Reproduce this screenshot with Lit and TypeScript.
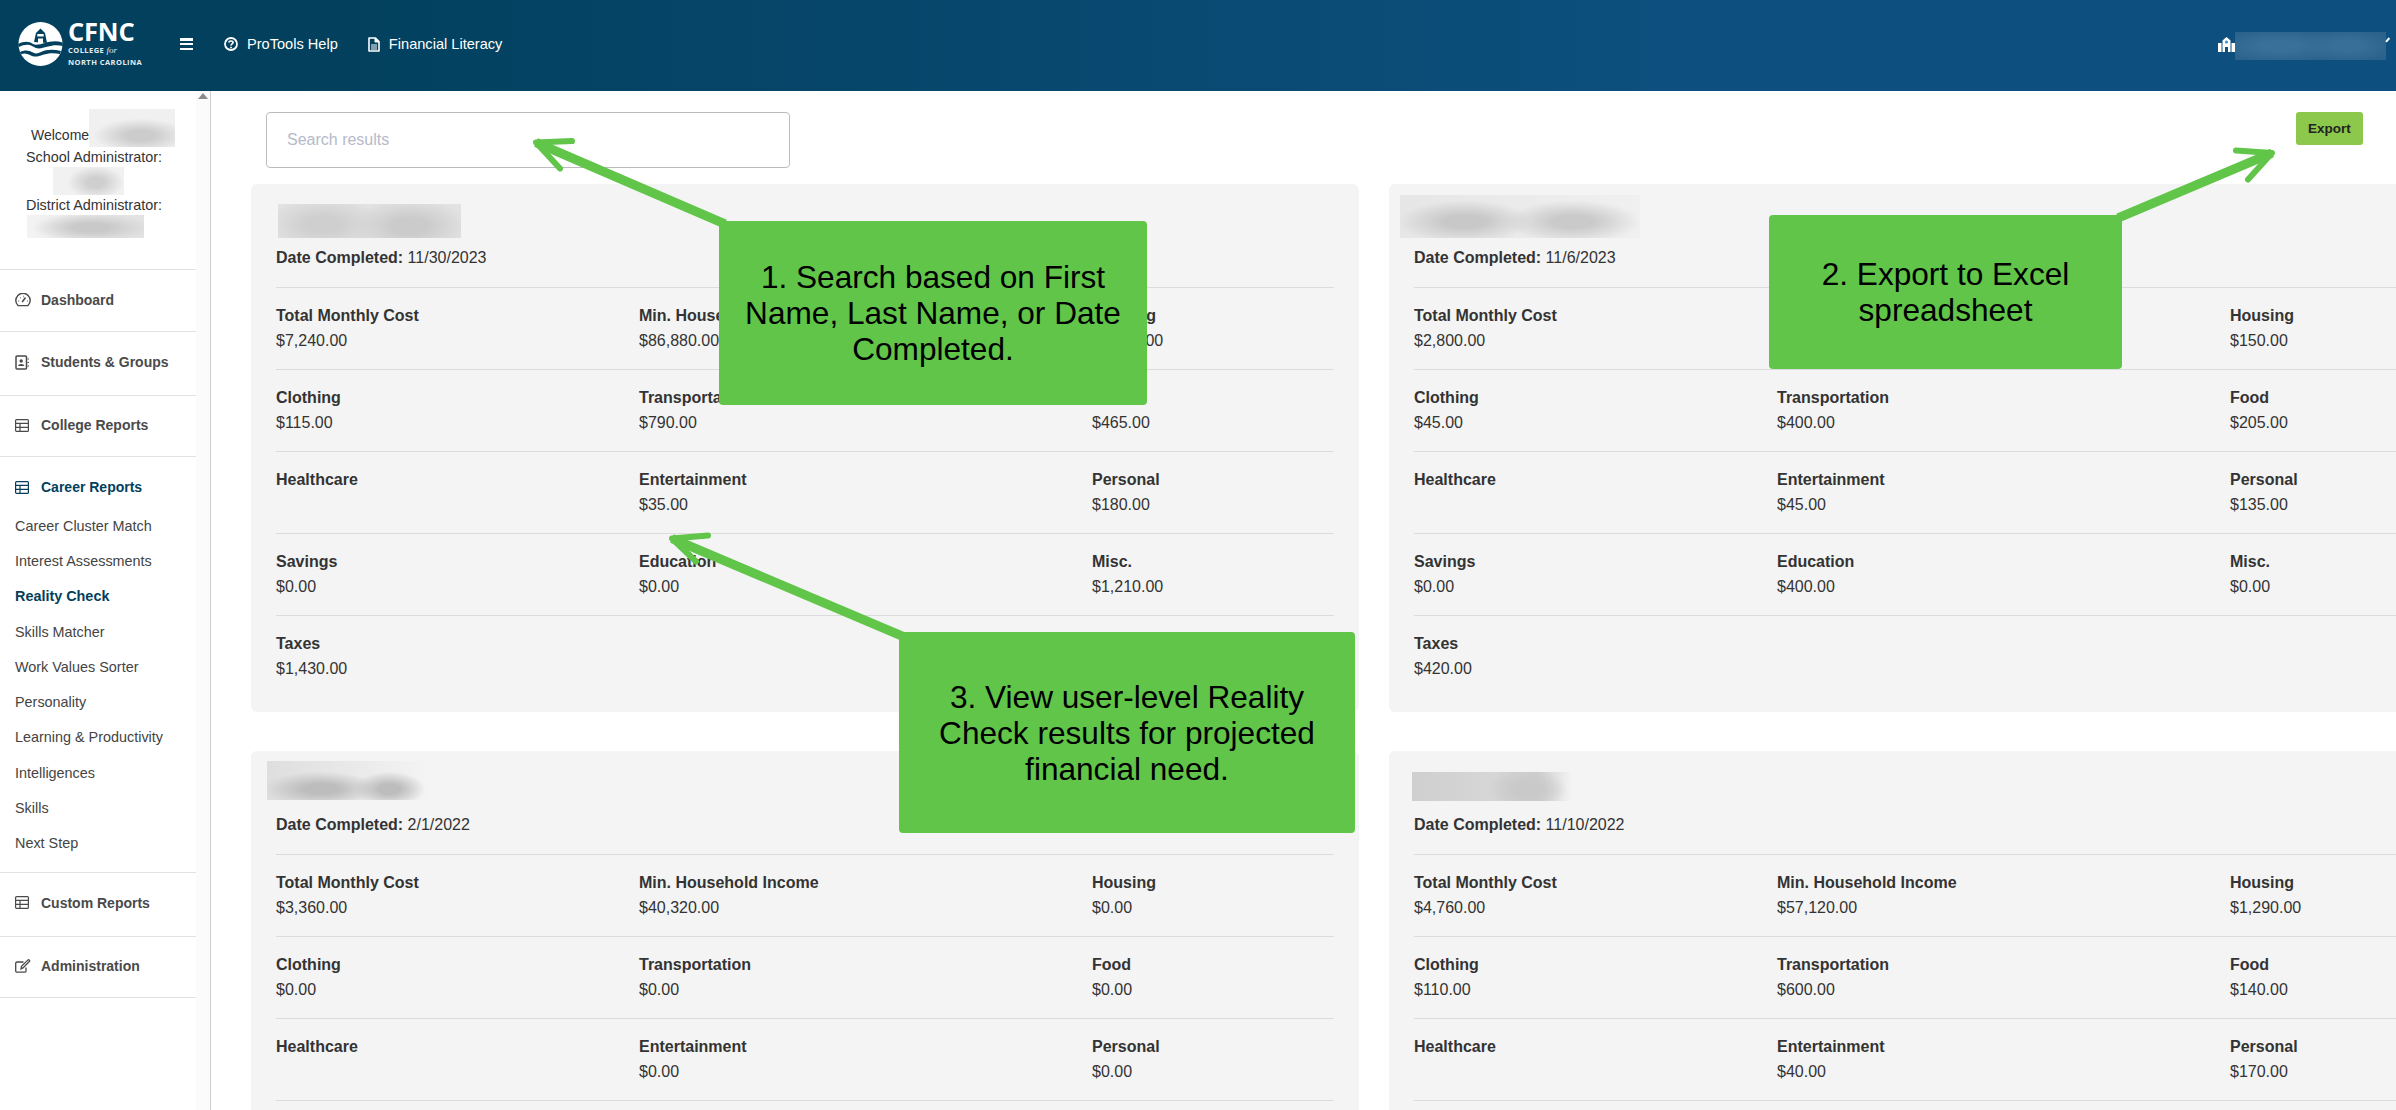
import { LitElement, html, css, svg } from "lit";
import { customElement } from "lit/decorators.js";

type Cell = [string, string];
interface Card { name: string; date: string; blur: [number, number, number, number]; rows: Cell[][]; }

const m = (s: string) => (s ? "$" + s + ".00" : "");
const full = (v: string[]): Cell[][] => [
  [["Total Monthly Cost", m(v[0])], ["Min. Household Income", m(v[1])], ["Housing", m(v[2])]],
  [["Clothing", m(v[3])], ["Transportation", m(v[4])], ["Food", m(v[5])]],
  [["Healthcare", ""], ["Entertainment", m(v[6])], ["Personal", m(v[7])]],
  [["Savings", m(v[8])], ["Education", m(v[9])], ["Misc.", m(v[10])]],
  [["Taxes", m(v[11])]],
];
const part = (v: string[]): Cell[][] => [...full([...v, "", "", "", ""]).slice(0, 3), []];

const CARDS: Card[] = [
  { name: "a", date: "11/30/2023", blur: [27, 20, 183, 34], rows: full(["7,240", "86,880", "3,015", "115", "790", "465", "35", "180", "0", "0", "1,210", "1,430"]) },
  { name: "b", date: "11/6/2023", blur: [11, 11, 240, 43], rows: full(["2,800", "33,600", "150", "45", "400", "205", "45", "135", "0", "400", "0", "420"]) },
  { name: "c", date: "2/1/2022", blur: [16, 10, 180, 39], rows: part(["3,360", "40,320", "0", "0", "0", "0", "0", "0"]) },
  { name: "d", date: "11/10/2022", blur: [23, 21, 160, 29], rows: part(["4,760", "57,120", "1,290", "110", "600", "140", "40", "170"]) },
];

const SUBS = ["Career Cluster Match", "Interest Assessments", "Reality Check", "Skills Matcher", "Work Values Sorter", "Personality", "Learning & Productivity", "Intelligences", "Skills", "Next Step"];

const icoGauge = svg`<svg class="ni" viewBox="0 0 16 14" width="16" height="14" fill="none" stroke="currentColor" stroke-width="1.4"><path d="M3 12.6h10c1.2-1.2 2.2-3 2.2-5.1A7.2 7.2 0 0 0 .8 7.500c0 2.100 1 3.900 2.200 5.100z"/><path d="M7.200 9 10.500 4.500" stroke-width="1.500"/><path d="M3.500 8h.6M5 4.700h.6M8 3.500h.6M12 8h.6" stroke-width="1.300"/></svg>`;
const icoContact = svg`<svg class="ni" viewBox="0 0 14 15" width="14" height="15" fill="none" stroke="currentColor" stroke-width="1.500"><rect x="1" y="1" width="10.500" height="13" rx="1"/><circle cx="6.200" cy="6" r="1.700" fill="currentColor" stroke="none"/><path d="M3 11c.3-2.800 6-2.800 6.400 0z" fill="currentColor" stroke="none"/><path d="M12.500 4h1.500M12.500 7.500h1.500M12.500 11h1.500" stroke-width="1.200"/></svg>`;
const icoTable = svg`<svg class="ni" viewBox="0 0 14 13" width="14" height="13" fill="none" stroke="currentColor" stroke-width="1.200"><rect x=".6" y=".6" width="12.800" height="11.800" rx="1"/><path d="M.6 4.300h12.800M.6 8.400h12.800M5 4.300v8.100"/></svg>`;
const icoPen = svg`<svg class="ni" viewBox="0 0 16 14" width="16" height="14" fill="none" stroke="currentColor" stroke-width="1.300"><path d="M11 8.500v3.400c0 .8-.5 1.300-1.300 1.300H2c-.8 0-1.300-.5-1.300-1.300V4.300C.7 3.500 1.200 3 2 3h6.500"/><path d="M6 9.800l.5-2.400 6.300-6.300c.5-.5 1.100-.5 1.500 0 .5.500.5 1.100 0 1.500L8 8.900z"/></svg>`;

@customElement("app-root")
export class AppRoot extends LitElement {
  static styles = css`
    :host { display: block; position: relative; width: 2396px; height: 1110px; overflow: hidden; background: #fff; font-family: "Liberation Sans", Arial, sans-serif; color: #333; }
    * { box-sizing: border-box; }
    header { height: 91px; padding: 0 0 3px 18px; display: flex; align-items: center; color: #fff; background: linear-gradient(90deg, #02405d 0%, #02405d 12%, #0d4f7e 70%, #0d4f7e 100%); }
    .logo { display: flex; width: 162px; flex: none; align-items: center; }
    .logotext { margin-left: 5px; display: flex; flex-direction: column; font-family: "Open Sans", sans-serif; font-weight: 700; color: #fff; }
    .cfnc { font-size: 25.500px; line-height: 21px; letter-spacing: -.2px; margin-bottom: 2px; }
    .lsub { font-size: 7.500px; line-height: 12px; letter-spacing: .45px; color: #e6edf1; }
    .lsub i { font-family: "Liberation Serif", serif; font-size: 9px; font-weight: 400; letter-spacing: 0; }
    .burger { width: 13px; height: 12px; flex: none; display: flex; flex-direction: column; justify-content: space-between; margin-right: 31px; }
    .burger span { display: block; height: 2.500px; background: #fff; }
    .hlink { display: flex; align-items: center; font-size: 14.600px; color: #fff; }
    .hlink svg { margin-right: 9px; flex: none; }
    .hlink.help { margin-right: 30px; }
    .hright { margin-left: auto; margin-right: 6px; display: flex; align-items: center; }
    .hblur { width: 151px; height: 28px; margin-top: 4px; background: radial-gradient(ellipse 45% 60% at 30% 50%, #39709a, #39709a 30%, transparent), radial-gradient(ellipse 30% 60% at 75% 50%, #386f98, #386f98 30%, transparent), #2a628c; }
    .tick { width: 5px; height: 1.500px; background: #fff; transform: rotate(-50deg); margin: -8px 0 0 -1px; }
    .body { display: flex; height: 1019px; }
    aside { width: 211px; flex: none; display: flex; border-right: 1px solid #cfcfcf; }
    .snav { width: 196px; flex: none; }
    .sbar { flex: 1; background: #fbfbfb; display: flex; justify-content: center; padding-top: 2px; }
    .sbar i { width: 0; height: 0; border-left: 5px solid transparent; border-right: 5px solid transparent; border-bottom: 6px solid #8a8a8a; }
    .user { height: 178px; padding-top: 18px; font-size: 14.400px; color: #333; }
    .welcome { display: flex; align-items: flex-end; height: 38px; margin-left: 31px; font-size: 14px; padding-bottom: 4px; position: relative; }
    .ub { flex: none; }
    .ub1 { width: 86px; height: 38px; margin-bottom: -4px; background: radial-gradient(ellipse 55% 45% at 60% 70%, #ccc, #ccc 30%, transparent), #f0f0f0; }
    .ul { line-height: 20px; margin-left: 26px; white-space: nowrap; }
    .ub2 { width: 71px; height: 28px; margin-left: 53px; background: radial-gradient(ellipse 40% 60% at 60% 55%, #cfcfcf, #cfcfcf 30%, transparent), #f1f1f1; }
    .ub3 { width: 117px; height: 23px; margin: 0 0 0 27px; background: radial-gradient(ellipse 50% 65% at 55% 55%, #c9c9c9, #c9c9c9 30%, transparent), linear-gradient(90deg, #f3f3f3, #e2e2e2); }
    .nav { border-top: 1px solid #e2e2e2; display: flex; align-items: center; padding: 0 0 1px 15px; font-size: 14px; font-weight: 700; color: #4a4a4a; }
    .nav .ni { flex: none; margin-right: 10px; }
    .nav .iw { width: 26px; flex: none; display: flex; }
    .n-dash { height: 62px; }
    .n-stud { height: 64px; padding-bottom: 3px; }
    .n-coll { height: 61px; padding-bottom: 2px; }
    .n-group { height: 52px; color: #033f5c; padding-top: 9px; padding-bottom: 0; }
    .n-cust { height: 64px; padding-bottom: 3px; }
    .n-admin { height: 62px; border-bottom: 1px solid #e2e2e2; }
    .subs { padding-bottom: 11px; }
    .sub { height: 35.300px; display: flex; align-items: center; padding-left: 15px; font-size: 14.400px; color: #444; }
    .sub.on { font-weight: 700; color: #033f5c; }
    main { flex: 1; min-width: 0; padding: 21px 33px 0 40px; overflow: hidden; }
    .tools { display: flex; justify-content: space-between; align-items: flex-start; margin: 0 0 16px 15px; }
    .search { width: 524px; height: 56px; border: 1px solid #bbb; border-radius: 4px; padding: 0 20px; display: flex; align-items: center; font-size: 16px; color: #b6bac9; }
    .export { width: 67px; height: 33px; border-radius: 3px; background: #8bc84b; display: flex; align-items: center; justify-content: center; font-size: 13.500px; font-weight: 700; color: #222; }
    .cards { display: grid; grid-template-columns: 1108px 1108px; gap: 39px 30px; }
    .card { position: relative; background: #f4f4f4; border-radius: 6px; padding: 0 25px 15px; }
    .nm { height: 62px; }
    .blur { position: absolute; }
    .blur-a { background: radial-gradient(ellipse 32% 80% at 25% 60%, #cfcfcf, #cfcfcf 30%, transparent), radial-gradient(ellipse 32% 80% at 72% 65%, #cbcbcb, #cbcbcb 30%, transparent), #e2e2e2; }
    .blur-b { background: radial-gradient(ellipse 28% 50% at 27% 62%, #c8c8c8, #c8c8c8 30%, transparent), radial-gradient(ellipse 28% 50% at 72% 62%, #cacaca, #cacaca 30%, transparent), linear-gradient(90deg, #e6e6e6, #f0f0f0); }
    .blur-c { background: radial-gradient(ellipse 32% 45% at 30% 72%, #bdbdbd, #bdbdbd 30%, transparent), radial-gradient(ellipse 20% 45% at 68% 72%, #bdbdbd, #bdbdbd 30%, transparent), linear-gradient(90deg, #dedede, #f4f4f4 92%); }
    .blur-d { background: radial-gradient(ellipse 25% 70% at 72% 60%, #c9c9c9, #c9c9c9 30%, transparent), linear-gradient(90deg, #cfcfcf 0%, #d6d6d6 50%, #cdcdcd 78%, #f4f4f4 100%); }
    .date { height: 41px; line-height: 24px; font-size: 16px; white-space: nowrap; }
    b { font-weight: 700; }
    .row { display: grid; grid-template-columns: 363px 453px 1fr; height: 82px; border-top: 1px solid #dcdcdc; padding-top: 18px; font-size: 16px; }
    .lab { font-weight: 700; line-height: 20px; margin-bottom: 5px; }
    .val { line-height: 20px; }
    .callout { position: absolute; background: #60c548; border-radius: 4px; color: #000; font-size: 31.600px; line-height: 36px; text-align: center; display: flex; align-items: center; justify-content: center; padding: 0 14px; }
    .c1 { left: 719px; top: 221px; width: 428px; height: 184px; }
    .c2 { left: 1769px; top: 215px; width: 353px; height: 154px; }
    .c3 { left: 899px; top: 632px; width: 456px; height: 201px; padding: 0 30px; }
    .arrows { position: absolute; left: 0; top: 0; pointer-events: none; }
  `;

  private arrow(tip: [number, number], a: [number, number], b: [number, number], tail: [number, number]) {
    return svg`<line x1=${tip[0]} y1=${tip[1]} x2=${tail[0]} y2=${tail[1]} stroke-width="9"/>
      <polyline points="${a[0]},${a[1]} ${tip[0]},${tip[1]} ${b[0]},${b[1]}" fill="none" stroke-width="6" stroke-linecap="round" stroke-linejoin="round"/>`;
  }

  private card(c: Card) {
    const [l, t, w, h] = c.blur;
    return html`<section class="card">
      <div class="nm"><div class="blur blur-${c.name}" style="left:${l}px;top:${t}px;width:${w}px;height:${h}px"></div></div>
      <div class="date"><b>Date Completed:</b> ${c.date}</div>
      ${c.rows.map((r) => html`<div class="row">${r.map(([k, v]) => html`<div><div class="lab">${k}</div><div class="val">${v}</div></div>`)}</div>`)}
    </section>`;
  }

  render() {
    return html`
      <header>
        <div class="logo">
          <svg width="45" height="44" viewBox="0 0 45 44">
            <circle cx="22.500" cy="22" r="22" fill="#fff"/>
            <path d="M16 20 L18 11 L22.500 6.500 L27 11 L29 21 Z" fill="#02405d"/>
            <path d="M19.300 12h6.400v2.600h-6.400zM20 16.500h5v6h-5z" fill="#fff"/>
            <path d="M0 22C6 19 11 19 15 22c3 1.800 8 0 12-1 5-1.500 11-2.600 17.500-.5L45 24c-6-1.500-11-.8-16 .8-5 1.600-10 2.700-14-.3-4-2.600-9-2-14 .5z" fill="#02405d"/>
            <path d="M2 30c5-2.500 9-1.800 13 .5 3 1.500 5 1 8-.5 5-2.500 12-3 20-1l-1 3c-6-1.400-12-1-17 .8-5 2-9 2.700-13 .2-3-1.700-6-2-9-.8z" fill="#02405d"/>
          </svg>
          <div class="logotext">
            <div class="cfnc">CFNC</div>
            <div class="lsub">COLLEGE <i>for</i></div>
            <div class="lsub">NORTH CAROLINA</div>
          </div>
        </div>
        <div class="burger"><span></span><span></span><span></span></div>
        <div class="hlink help">
          <svg width="14" height="14" viewBox="0 0 14 14" fill="none" stroke="#fff"><circle cx="7" cy="7" r="6" stroke-width="1.800"/><path d="M5 5.500C5 3.500 9 3.500 9 5.500 9 7 7 6.800 7 8.500" stroke-width="1.700"/><path d="M7 9.800v1.400" stroke-width="1.700"/></svg>
          ProTools Help
        </div>
        <div class="hlink">
          <svg width="12" height="15" viewBox="0 0 12 15" fill="none" stroke="#fff"><path d="M1 1h6.500L11 4.500V14H1z" stroke-width="1.600" stroke-linejoin="round"/><path d="M7 1v4h4" fill="#fff" stroke-width="1"/><path d="M3 8h6M3 10h6M3 12h6" stroke-width="1.100"/></svg>
          Financial Literacy
        </div>
        <div class="hright">
          <svg width="17" height="15" viewBox="0 0 17 15"><path d="M8.500 0 12.500 3.500V15H4.500V3.500Z" fill="#fff"/><path d="M0 6h3.500v9H0zM13.500 6H17v9h-3.500z" fill="#fff"/><circle cx="8.500" cy="5" r="1.500" fill="#2b8fd0"/><rect x="7" y="10" width="3" height="5" fill="#0d4f7e"/></svg>
          <div class="hblur"></div>
          <div class="tick"></div>
        </div>
      </header>
      <div class="body">
        <aside>
          <div class="snav">
            <div class="user">
              <div class="welcome">Welcome<div class="ub ub1"></div></div>
              <div class="ul">School Administrator:</div>
              <div class="ub ub2"></div>
              <div class="ul">District Administrator:</div>
              <div class="ub ub3"></div>
            </div>
            <div class="nav n-dash"><span class="iw">${icoGauge}</span>Dashboard</div>
            <div class="nav n-stud"><span class="iw">${icoContact}</span>Students &amp; Groups</div>
            <div class="nav n-coll"><span class="iw">${icoTable}</span>College Reports</div>
            <div class="nav n-group"><span class="iw">${icoTable}</span>Career Reports</div>
            <div class="subs">${SUBS.map((s) => html`<div class="sub ${s === "Reality Check" ? "on" : ""}">${s}</div>`)}</div>
            <div class="nav n-cust"><span class="iw">${icoTable}</span>Custom Reports</div>
            <div class="nav n-admin"><span class="iw">${icoPen}</span>Administration</div>
          </div>
          <div class="sbar"><i></i></div>
        </aside>
        <main>
          <div class="tools">
            <div class="search">Search results</div>
            <div class="export">Export</div>
          </div>
          <div class="cards">${CARDS.map((c) => this.card(c))}</div>
        </main>
      </div>
      <svg class="arrows" width="2396" height="1110" stroke="#60c548">
        ${this.arrow([536, 142.5], [572, 141], [560, 168.5], [725, 224])}
        ${this.arrow([2272, 153], [2236, 150.500], [2248, 179.500], [2118, 218])}
        ${this.arrow([672, 538.500], [708, 535.500], [696, 561.500], [902, 636])}
      </svg>
      <div class="callout c1">1. Search based on First Name, Last Name, or Date Completed.</div>
      <div class="callout c2">2. Export to Excel<br />spreadsheet</div>
      <div class="callout c3">3. View user-level Reality Check results for projected financial need.</div>
    `;
  }
}
